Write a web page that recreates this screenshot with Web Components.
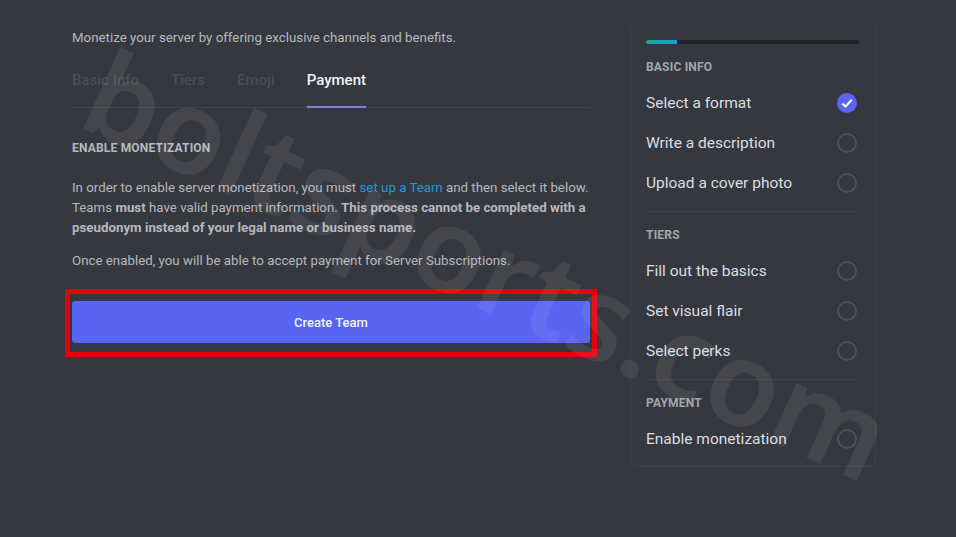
<!doctype html>
<html>
<head>
<meta charset="utf-8">
<style>
  html, body { margin: 0; height: 100%; }
  body {
    background: #36383f;
    font-family: Roboto, "Noto Sans", sans-serif;
    overflow: hidden;
  }
</style>
</head>
<body>
<monetize-page>
  <payment-panel></payment-panel>
  <checklist-card></checklist-card>
</monetize-page>
<water-mark>boltsports.com</water-mark>

<script>
class MonetizePage extends HTMLElement {
  constructor() {
    super();
    this.attachShadow({ mode: "open" });
    this.shadowRoot.innerHTML = `
      <style>
        :host {
          display: grid;
          grid-template-columns: 518px 246px;
          column-gap: 40px;
          padding: 28px 0 0 72px;
          align-items: start;
        }
      </style>
      <slot></slot>
    `;
  }
}

class TabStrip extends HTMLElement {
  constructor() {
    super();
    this.attachShadow({ mode: "open" });
    this.shadowRoot.innerHTML = `
      <style>
        :host {
          display: flex;
          gap: 32px;
          height: 60px;
          box-sizing: border-box;
          border-bottom: 1px solid #42454c;
        }
        span {
          box-sizing: border-box;
          height: 60px;
          padding-top: 22px;
          font-size: 15px;
          line-height: 20px;
          font-weight: 500;
          color: #4a4d54;
        }
        .active {
          color: #f2f3f5;
          border-bottom: 2px solid #7d85d8;
        }
      </style>
      <span>Basic Info</span>
      <span>Tiers</span>
      <span>Emoji</span>
      <span class="active">Payment</span>
    `;
  }
}

class CreateButton extends HTMLElement {
  constructor() {
    super();
    this.attachShadow({ mode: "open" });
    this.shadowRoot.innerHTML = `
      <style>
        :host { display: block; position: relative; }
        button {
          display: block;
          width: 100%;
          height: 42px;
          padding: 1px 0 0;
          border: 0;
          border-radius: 3px;
          background: #5865f2;
          color: #f2f3f5;
          font: 500 13px/20px Roboto, sans-serif;
        }
        .mark {
          position: absolute;
          inset: -12px -7px -14px -7px;
          border: 5px solid #e5000c;
          box-sizing: border-box;
        }
      </style>
      <button><slot></slot></button>
      <div class="mark"></div>
    `;
  }
}

class PaymentPanel extends HTMLElement {
  constructor() {
    super();
    this.attachShadow({ mode: "open" });
    this.shadowRoot.innerHTML = `
      <style>
        :host { display: block; color: #b5b8be; font-size: 13.3px; line-height: 20px; }
        .intro { margin: 0; }
        h2 {
          margin: 30px 0 20px;
          font-size: 12px;
          line-height: 20px;
          font-weight: 700;
          letter-spacing: .2px;
          color: #b5b8be;
        }
        p { margin: 0 0 13px; white-space: nowrap; }
        a { color: #1c9bd9; text-decoration: none; }
        b { font-weight: 700; }
        create-button { margin-top: 30px; }
      </style>
      <p class="intro">Monetize your server by offering exclusive channels and benefits.</p>
      <tab-strip></tab-strip>
      <h2>ENABLE MONETIZATION</h2>
      <p>In order to enable server monetization, you must <a href="#">set up a Team</a> and then select it below.<br>
      Teams <b>must</b> have valid payment information. <b>This process cannot be completed with a<br>
      pseudonym instead of your legal name or business name.</b></p>
      <p>Once enabled, you will be able to accept payment for Server Subscriptions.</p>
      <create-button>Create Team</create-button>
    `;
  }
}

class CheckRow extends HTMLElement {
  constructor() {
    super();
    this.attachShadow({ mode: "open" });
    this.shadowRoot.innerHTML = `
      <style>
        :host {
          display: flex;
          align-items: center;
          justify-content: space-between;
          height: 40px;
          font-size: 15.5px;
          font-weight: 400;
          color: #dbdee1;
        }
        svg { display: block; margin-right: 2px; }
      </style>
      <span><slot></slot></span>
      ${this.hasAttribute("done")
        ? `<svg width="20" height="20" viewBox="0 0 20 20">
             <circle cx="10" cy="10" r="10" fill="#5865f2"/>
             <path d="M5.2 10.4l3.3 3.1 6.3-6.8" fill="none" stroke="#fff" stroke-width="2"/>
           </svg>`
        : `<svg width="20" height="20" viewBox="0 0 20 20">
             <circle cx="10" cy="10" r="9" fill="none" stroke="#4e5058" stroke-width="2"/>
           </svg>`}
    `;
  }
}

class ChecklistCard extends HTMLElement {
  constructor() {
    super();
    this.attachShadow({ mode: "open" });
    this.shadowRoot.innerHTML = `
      <style>
        :host {
          display: block;
          box-sizing: border-box;
          height: 439px;
          padding: 12px 16px 0 15px;
          border: 1px solid #3f4249;
          border-top: 0;
          border-radius: 0 0 8px 8px;
        }
        .bar { height: 4px; border-radius: 2px; background: #232428; overflow: hidden; }
        .bar i { display: block; width: 31px; height: 100%; background: linear-gradient(90deg, #1ea58c, #1c9bd9); }
        h3 {
          margin: 0;
          height: 20px;
          font-size: 12px;
          line-height: 20px;
          font-weight: 700;
          letter-spacing: .2px;
          color: #a3a6ad;
        }
        .first { margin-top: 13px; }
        .list { margin: 6px 0 8px; }
        hr { margin: 0 0 13px; border: 0; height: 1px; background: #3f4249; }
      </style>
      <div class="bar"><i></i></div>
      <h3 class="first">BASIC INFO</h3>
      <div class="list">
        <check-row done>Select a format</check-row>
        <check-row>Write a description</check-row>
        <check-row>Upload a cover photo</check-row>
      </div>
      <hr>
      <h3>TIERS</h3>
      <div class="list">
        <check-row>Fill out the basics</check-row>
        <check-row>Set visual flair</check-row>
        <check-row>Select perks</check-row>
      </div>
      <hr>
      <h3>PAYMENT</h3>
      <div class="list">
        <check-row>Enable monetization</check-row>
      </div>
    `;
  }
}

class WaterMark extends HTMLElement {
  constructor() {
    super();
    this.attachShadow({ mode: "open" });
    this.shadowRoot.innerHTML = `
      <style>
        :host {
          position: absolute;
          left: 118px;
          top: 30px;
          transform-origin: 0 0;
          transform: rotate(24.5deg);
          font: 600 118px/118px "Noto Sans", sans-serif;
          color: rgba(255, 255, 255, .07);
          white-space: nowrap;
          pointer-events: none;
        }
      </style>
      <slot></slot>
    `;
  }
}

customElements.define("tab-strip", TabStrip);
customElements.define("create-button", CreateButton);
customElements.define("payment-panel", PaymentPanel);
customElements.define("check-row", CheckRow);
customElements.define("checklist-card", ChecklistCard);
customElements.define("water-mark", WaterMark);
customElements.define("monetize-page", MonetizePage);
</script>
</body>
</html>
